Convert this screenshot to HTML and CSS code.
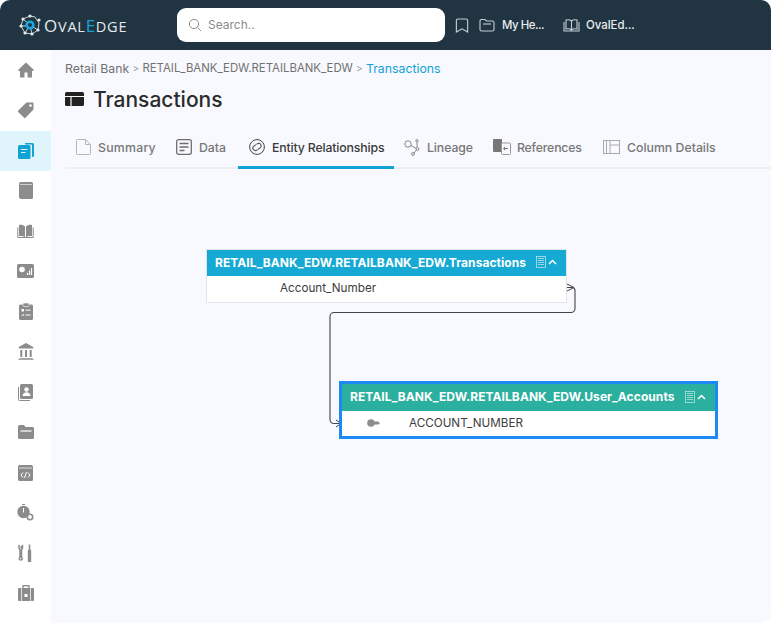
FILE: index.html
```html
<!DOCTYPE html>
<html lang="en">
<head>
<meta charset="utf-8">
<title>Transactions</title>
<link rel="stylesheet" href="styles.css">
</head>
<body>
<div class="app">
  <header class="topbar">
    <div class="logo">
      <svg class="logo-mark" width="24" height="24" viewBox="0 0 24 24"><g stroke="#c9d2d8" stroke-width="1" fill="none"><path d="M12 3 5 6 3 13l4 7 7 1 6-4 1-7-4-6z"/><path d="M5 6l7 6M3 13h9M7 20l5-8M14 21l-2-9M20 17l-8-5"/></g><g fill="#e6ebee"><circle cx="12" cy="3" r="1.600"/><circle cx="5" cy="6" r="1.600"/><circle cx="3" cy="13" r="1.600"/><circle cx="7" cy="20" r="1.600"/><circle cx="14" cy="21" r="1.600"/><circle cx="20" cy="17" r="1.600"/><circle cx="21" cy="7" r="1.600"/></g><circle cx="12" cy="12" r="4.600" fill="#18a9e0"/><circle cx="12" cy="12" r="2" fill="#203442"/></svg>
      <span class="logo-text"><span class="logo-big">O</span>VAL<span class="logo-e">E</span>DGE</span>
    </div>
    <div class="search">
      <svg width="14" height="14" viewBox="0 0 14 14" fill="none" stroke="#8d8d8d" stroke-width="1"><circle cx="6" cy="6" r="4.600"/><path d="M9.500 9.500 13 13"/></svg>
      <span>Search..</span>
    </div>
    <nav class="quick">
      <svg class="bookmark" width="14" height="15" viewBox="0 0 14 16" fill="none" stroke="#c5ced4" stroke-width="1.200"><path d="M2.500 1h9A1.500 1.500 0 0 1 13 2.500V15l-6-3.500L1 15V2.500A1.500 1.500 0 0 1 2.500 1z"/></svg>
      <span class="quick-item first">
        <svg width="16" height="14" viewBox="0 0 16 14" fill="none" stroke="#c5ced4" stroke-width="1.100"><path d="M1 3a1.500 1.500 0 0 1 1.500-1.500h3.500l1.500 1.500h6A1.500 1.500 0 0 1 15 4.500v7a1.500 1.500 0 0 1-1.500 1.500h-11A1.500 1.500 0 0 1 1 11.500z"/><path d="M4 6h8"/></svg>
        <span>My He...</span>
      </span>
      <span class="quick-item">
        <svg width="17" height="14" viewBox="0 0 17 14" fill="none" stroke="#c5ced4" stroke-width="1.100"><path d="M8.500 3C7 1.500 5 1.500 3 2v9c2-.5 4-.5 5.500 1 1.500-1.500 3.500-1.500 5.500-1V2c-2-.5-4-.5-5.500 1zM8.500 3v9M1 4v9h15V4"/></svg>
        <span>OvalEd...</span>
      </span>
    </nav>
  </header>
  <div class="body">
    <aside class="sidebar">
      <a class="side-item"><svg width="16" height="16" viewBox="0 0 16 16" fill="#8c8c8c"><path d="M8 .5 .5 7.500V9H2v6.500h4.500V10.500h3v5H14V9h1.500V7.500z"/></svg></a>
      <a class="side-item"><svg width="18" height="18" viewBox="0 0 18 18" fill="#8c8c8c"><path d="M9.500 1.500H16a.8.8 0 0 1 .5.500v6.500L8.500 16.800a1 1 0 0 1-1.400 0L1.200 10.900a1 1 0 0 1 0-1.400zM13.500 3.200a1.300 1.300 0 1 0 .01 0z" fill-rule="evenodd"/></svg></a>
      <a class="side-item active"><svg width="16" height="17" viewBox="0 0 16 17"><path d="M7 1h7.500A1.500 1.500 0 0 1 16 2.500v11a1.500 1.500 0 0 1-1.500 1.500H14V3.500A1 1 0 0 0 13 2.500H7z" fill="#12a3d6"/><rect x="0" y="3" width="12.500" height="14" rx="1.500" fill="#12a3d6"/><path d="M3 7.500h6.500M3 10.500h4.500" stroke="#e0f5fb" stroke-width="1.200"/></svg></a>
      <a class="side-item"><svg width="14" height="17" viewBox="0 0 14 17" fill="#8c8c8c"><path d="M2 0h10.500A1.500 1.500 0 0 1 14 1.500V15.500A1.500 1.500 0 0 1 12.500 17H2a2 2 0 0 1-2-2V2a2 2 0 0 1 2-2z"/><path d="M1 2.500h12" stroke="#fff" stroke-width=".6"/></svg></a>
      <a class="side-item"><svg width="17" height="15" viewBox="0 0 17 15" fill="#8c8c8c"><path d="M8 2.500C6.500 1 4 .5 2 1v11c2-.3 4.500 0 6 1.300zM9 2.500C10.500 1 13 .5 15 1v11c-2-.3-4.500 0-6 1.300z"/><path d="M.8 3.500v10h15.400v-10" fill="none" stroke="#8c8c8c"/></svg></a>
      <a class="side-item"><svg width="17" height="14" viewBox="0 0 17 14"><rect width="17" height="14" rx="1.500" fill="#8c8c8c"/><circle cx="5" cy="5.500" r="2.800" fill="#fff"/><path d="M10.500 11V9M12.500 11V6.500M14.500 11V4" stroke="#fff" stroke-width="1.200"/></svg></a>
      <a class="side-item"><svg width="14" height="17" viewBox="0 0 14 17"><rect y="1.500" width="14" height="15.500" rx="1.500" fill="#8c8c8c"/><rect x="4" width="6" height="3.500" rx="1" fill="#8c8c8c" stroke="#fff" stroke-width=".6"/><rect x="2.500" y="6" width="2.500" height="2.500" fill="#fff"/><path d="M6.500 7.200h5M6.500 12h5M2.500 12l1 1 1.500-2" stroke="#fff" fill="none"/></svg></a>
      <a class="side-item"><svg width="16" height="17" viewBox="0 0 16 17" fill="#8c8c8c"><path d="M8 0 .8 4v1.500h14.400V4z"/><path d="M2.300 7h2v7h-2zM7 7h2v7H7zM11.700 7h2v7h-2zM1.300 15h13.400v.8H1.300zM.3 16.200h15.400v.8H.3z"/></svg></a>
      <a class="side-item"><svg width="15" height="17" viewBox="0 0 15 17"><rect x="2" width="13" height="15" rx="1.500" fill="#8c8c8c"/><path d="M.5 3v12.500A1 1 0 0 0 1.500 16.500H12" stroke="#8c8c8c" fill="none"/><circle cx="8.500" cy="5.500" r="2.200" fill="#fff"/><path d="M4.500 12c0-5 8-5 8 0z" fill="#fff"/></svg></a>
      <a class="side-item"><svg width="16" height="14" viewBox="0 0 16 14"><path d="M1.500 0h4.500l1.500 2h7A1.500 1.500 0 0 1 16 3.500v9a1.500 1.500 0 0 1-1.500 1.500h-13A1.500 1.500 0 0 1 0 12.500v-11A1.500 1.500 0 0 1 1.500 0z" fill="#8c8c8c"/><path d="M2.500 6h11" stroke="#fff" stroke-width="1.200"/></svg></a>
      <a class="side-item"><svg width="15" height="16" viewBox="0 0 15 16"><rect width="15" height="16" rx="1.500" fill="#8c8c8c"/><path d="M1 3h13" stroke="#fff" stroke-width=".7"/><path d="M5 7.500 3 10l2 2.500M10 7.500l2 2.500-2 2.500M8.500 7l-2 6" stroke="#fff" fill="none"/></svg></a>
      <a class="side-item"><svg width="17" height="17" viewBox="0 0 17 17"><path d="M5 .5h3" stroke="#8c8c8c"/><circle cx="6.500" cy="8" r="6.200" fill="#8c8c8c"/><path d="M6.500 4v4.500" stroke="#fff"/><circle cx="13" cy="13" r="2.700" fill="#fff" stroke="#8c8c8c" stroke-width="1.600"/></svg></a>
      <a class="side-item"><svg width="15" height="18" viewBox="0 0 15 18" fill="none" stroke="#8c8c8c"><path d="M1 .8v3.500l1 1.500v7.500a1.500 1.500 0 1 0 1.500 0V5.800l1-1.500V.8v3H3.200V2" stroke-width="1.500"/><path d="M11.500 .5v6" stroke-width="1.500"/><path d="M11.500 7v10" stroke-width="3.400" stroke-linecap="round"/></svg></a>
      <a class="side-item"><svg width="16" height="16" viewBox="0 0 16 16"><rect y="3" width="16" height="13" rx="1" fill="#8c8c8c"/><rect x="5" y=".7" width="6" height="3" fill="none" stroke="#8c8c8c" stroke-width="1.300"/><path d="M3.500 3v13M12.500 3v13" stroke="#fff" stroke-width=".7"/><rect x="6.500" y="9" width="3" height="3" fill="#fff"/></svg></a>
    </aside>
    <main class="main">
      <div class="crumbs">
        <span>Retail Bank</span><i>&gt;</i><span class="crumb-upper">RETAIL_BANK_EDW.RETAILBANK_EDW</span><i>&gt;</i><span class="crumb-current">Transactions</span>
      </div>
      <h1 class="title">
        <svg width="19" height="14" viewBox="0 0 19 14" fill="#222"><rect width="19" height="14" rx="1.500"/><path d="M0 4.500h19M6 4.500V14" stroke="#f8f9fe" stroke-width="1.200"/></svg>
        <span>Transactions</span>
      </h1>
      <div class="tabs">
        <a class="tab tab-wide"><svg width="15" height="16" viewBox="0 0 15 16" fill="none" stroke="#b5b5b5" stroke-width="1"><path d="M1.500.5h8l5 5v9a1 1 0 0 1-1 1h-12a1 1 0 0 1-1-1v-13a1 1 0 0 1 1-1zM9.500.5v5h5"/></svg><span>Summary</span></a>
        <a class="tab"><svg width="16" height="16" viewBox="0 0 16 16" fill="none" stroke="#6e6e6e" stroke-width="1.300"><rect x=".7" y=".7" width="14.600" height="14.600" rx="2"/><path d="M3.500 4.500h9M3.500 8h9M3.500 11.500h5"/></svg><span>Data</span></a>
        <a class="tab active"><svg width="16" height="16" viewBox="0 0 16 16" fill="none" stroke="#444" stroke-width="1"><circle cx="8" cy="8" r="7.400"/><path d="M7 10.500H6a2.500 2.500 0 0 1 0-5h2.500M9 5.500h1a2.500 2.500 0 0 1 0 5H7.500" transform="rotate(-35 8 8)"/></svg><span>Entity Relationships</span></a>
        <a class="tab tab-tight"><svg width="17" height="17" viewBox="0 0 17 17" fill="none" stroke="#888" stroke-width="1"><circle cx="4" cy="5" r="3.200"/><circle cx="13" cy="1.800" r="1.200"/><circle cx="13.500" cy="10" r="1.400"/><circle cx="9" cy="15" r="1.400"/><path d="M13 3v5.500M7 6.500l5.200 3M12.500 11l-2.500 3"/></svg><span>Lineage</span></a>
        <a class="tab tab-refs"><svg width="18" height="16" viewBox="0 0 18 16"><path d="M0 1a1 1 0 0 1 1-1h8v13H1a1 1 0 0 1-1-1z" fill="#777"/><rect x="8.500" y="4" width="9" height="11.500" rx="1" fill="#f8f9fe" stroke="#999"/><path d="M15 9.500h-4.500M12.200 7.800l-1.800 1.700 1.800 1.700" stroke="#777" fill="none"/></svg><span>References</span></a>
        <a class="tab"><svg width="17" height="14" viewBox="0 0 17 14" fill="none" stroke="#aaa" stroke-width="1"><rect x=".5" y=".5" width="16" height="13"/><path d="M3.500 .5v13M7 .5v13M7 5h9.500"/></svg><span>Column Details</span></a>
      </div>
      <section class="canvas">
        <svg class="links" width="720" height="455" viewBox="0 0 720 455" fill="none" stroke="#444" stroke-width="1.100">
          <path d="M515 119.500h6a3 3 0 0 1 3 3v18a4 4 0 0 1-4 4H283a4 4 0 0 0-4 4v103a4 4 0 0 0 4 4h6"/>
          <path d="M516 116l7 3.500-7 3.500M285 252l5 3.500-5 3.500" stroke-width="1"/>
        </svg>
        <article class="node node-source">
          <header class="node-head"><span>RETAIL_BANK_EDW.RETAILBANK_EDW.Transactions</span>
            <svg width="10" height="12" viewBox="0 0 10 12" fill="none" stroke="#cfeaf4" stroke-width=".7"><rect x=".5" y=".5" width="9" height="11"/><path d="M2 2.500h6M2 4.500h6M2 6.500h6M2 8.500h6"/></svg>
            <svg width="9" height="6" viewBox="0 0 9 6" fill="none" stroke="#fff" stroke-width="1.500"><path d="M1 5l3.500-3.500L8 5"/></svg>
          </header>
          <div class="node-row"><span class="col-name">Account_Number</span></div>
        </article>
        <article class="node node-target">
          <header class="node-head"><span>RETAIL_BANK_EDW.RETAILBANK_EDW.User_Accounts</span>
            <svg width="10" height="12" viewBox="0 0 10 12" fill="none" stroke="#cfeae5" stroke-width=".7"><rect x=".5" y=".5" width="9" height="11"/><path d="M2 2.500h6M2 4.500h6M2 6.500h6M2 8.500h6"/></svg>
            <svg width="9" height="6" viewBox="0 0 9 6" fill="none" stroke="#fff" stroke-width="1.500"><path d="M1 5l3.500-3.500L8 5"/></svg>
          </header>
          <div class="node-row">
            <svg class="key" width="13" height="8" viewBox="0 0 13 8" fill="#8c8c8c"><circle cx="4" cy="4" r="3.800"/><path d="M6 2.500h5l2 1.500-1.500 1.500H6z"/></svg>
            <span class="col-name">ACCOUNT_NUMBER</span>
          </div>
        </article>
      </section>
    </main>
  </div>
</div>
</body>
</html>
```
FILE: styles.css
```css
* { box-sizing: border-box; }
html, body { margin: 0; height: 100%; background: #fff; }
body { font-family: Inter, "Liberation Sans", sans-serif; overflow: hidden; }
.app { width: 771px; height: 623px; display: flex; flex-direction: column; border-radius: 10px; overflow: hidden; background: #f8f9fe; }

.topbar { height: 50px; flex: none; background: #203442; display: flex; align-items: center; padding-left: 18px; }
.logo { display: flex; align-items: center; gap: 2px; width: 159px; }
.logo-text { color: #e4e9ec; font-size: 14.500px; letter-spacing: .75px; font-family: "Open Sans", sans-serif; }
.logo-big { font-size: 17px; }
.logo-e { color: #18a3dc; font-size: 17px; }
.search { width: 268px; height: 34px; margin-bottom: 1px; background: #fff; border-radius: 9px; display: flex; align-items: center; gap: 6px; padding-left: 11px; color: #8b8b8b; font-size: 12px; }
.quick { display: flex; align-items: center; color: #e8ecef; font-size: 11.400px; font-weight: 500; margin-left: 10px; }
.quick-item { display: flex; align-items: center; gap: 6px; }
.quick-item.first { margin: 0 19px 0 10px; gap: 7px; letter-spacing: -.45px; }

.body { flex: 1; display: flex; min-height: 0; }
.sidebar { width: 51px; flex: none; background: #fff; display: flex; flex-direction: column; }
.side-item { height: 40.250px; flex: none; display: flex; align-items: center; justify-content: center; }
.side-item.active { background: #e0f5fb; }

.main { flex: 1; min-width: 0; display: flex; flex-direction: column; padding-left: 14px; }
.crumbs { height: 32px; padding-top: 4px; display: flex; align-items: center; gap: 3.250px; color: #717171; font-size: 12.300px; }
.crumbs i { font-style: normal; font-size: 10px; color: #999; }
.crumb-upper { font-size: 11.400px; }
.crumb-current { color: #12a3d6; }
.title { margin: 0; height: 34px; display: flex; align-items: center; gap: 9px; font-size: 21px; font-weight: 500; color: #2b2b2b; }
.tabs { margin-top: 15px; height: 38px; flex: none; display: grid; grid-template-columns: 101px 72px 156px 89px 110px 1fr; border-bottom: 2px solid #eceef1; }
.tab { height: 38px; display: flex; align-items: center; gap: 7px; padding: 0 0 6px 10px; color: #777; font-size: 12.300px; font-weight: 500; white-space: nowrap; }
.tab-wide { padding-left: 11px; letter-spacing: .25px; }
.tab-tight { gap: 6px; letter-spacing: -.1px; }
.tab-refs { gap: 6px; letter-spacing: -.2px; }
.tab.active { color: #3a3a3a; border-bottom: 3px solid #12a3d6; padding: 0 0 3px 11px; letter-spacing: -.15px; }

.canvas { flex: 1; position: relative; }
.links { position: absolute; left: -14px; top: -1px; }
.node { position: absolute; background: #fff; }
.node-source { left: 141px; top: 80px; width: 361px; height: 54px; border: 1px solid #e2e4e8; }
.node-target { left: 274px; top: 212px; width: 379px; height: 58px; border: 3px solid #1e88f5; }
.node-head { height: 26px; display: flex; align-items: center; gap: 2px; padding: 0 0 2px 8px; color: #fff; font-size: 12px; letter-spacing: .07px; font-weight: 700; white-space: nowrap; }
.node-head > span { margin-right: 8px; }
.node-source .node-head { background: #16a9d3; }
.node-target .node-head { background: #2bb09f; height: 27px; }
.node-row { height: 26px; padding-bottom: 2px; display: flex; align-items: center; color: #3d3d3d; font-size: 11.700px; position: relative; }
.node-target .node-row { height: 25px; padding-bottom: 1px; }
.node-source .col-name { margin-left: 73px; }
.node-target .col-name { margin-left: 67px; }
.key { position: absolute; left: 25px; top: 8px; }
```
